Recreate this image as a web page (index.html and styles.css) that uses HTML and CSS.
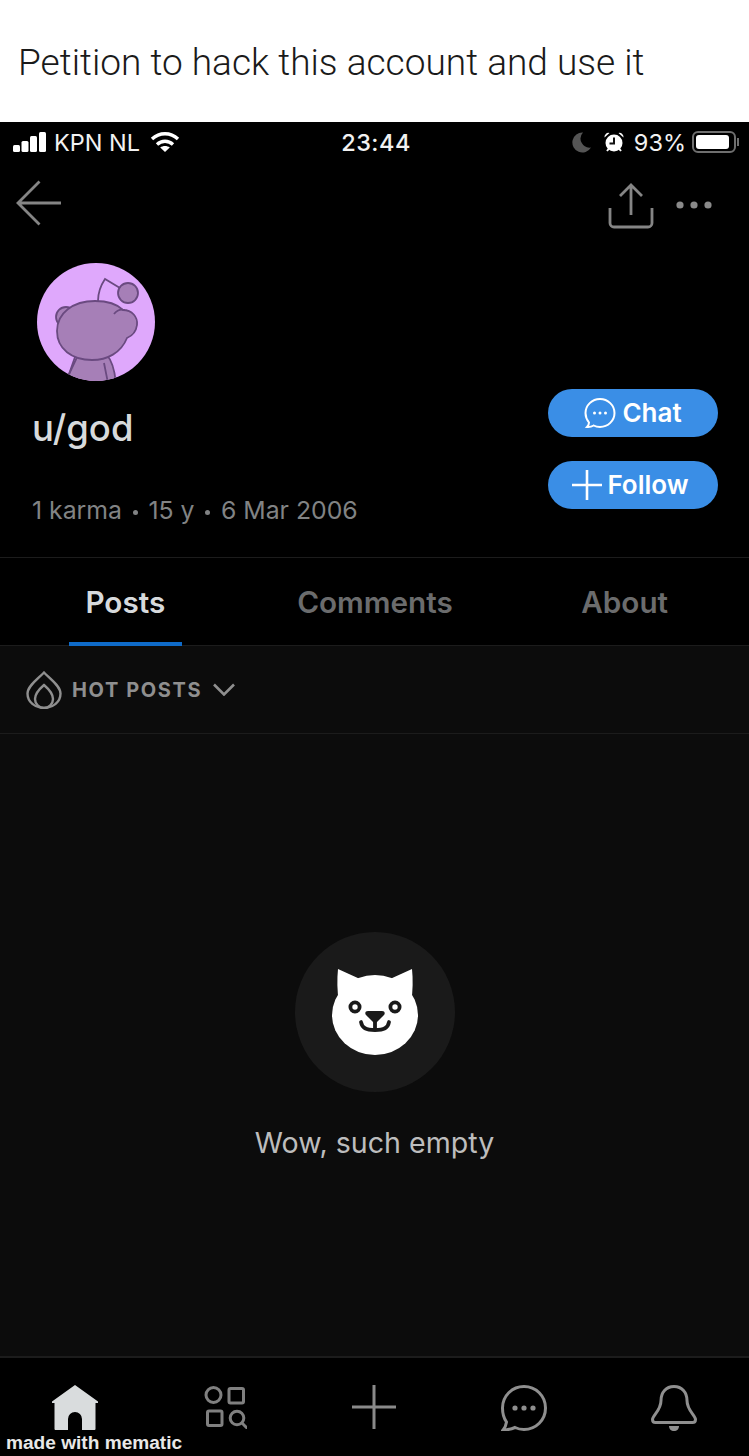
FILE: index.html
```html
<!DOCTYPE html>
<html lang="en">
<head>
<meta charset="UTF-8">
<meta name="viewport" content="width=device-width, initial-scale=1.0">
<title>Petition to hack this account</title>
<link rel="stylesheet" href="styles.css">
</head>
<body>
<div class="page">
    <div class="caption">Petition to hack this account and use it</div>

    <div class="status">
        <div class="status-left">
            <svg class="signal" width="33" height="22" viewBox="0 0 33 22" fill="#fff">
                <rect x="0" y="14" width="7" height="7" rx="1.500"/>
                <rect x="8.500" y="10" width="7" height="11" rx="1.500"/>
                <rect x="17" y="5" width="7" height="16" rx="1.500"/>
                <rect x="26" y="1" width="7" height="20" rx="1.500"/>
            </svg>
            <span class="carrier">KPN NL</span>
            <svg class="wifi" width="30" height="22" viewBox="0 0 30 22" fill="none" stroke="#fff" stroke-width="3.400">
                <path d="M2 8c7.500-7 18.500-7 26 0"/>
                <path d="M7 13.500c4.700-4.300 11.300-4.300 16 0"/>
                <path d="M15 21l-4.800-4.500c2.800-2 6.800-2 9.600 0z" fill="#fff" stroke="none"/>
            </svg>
        </div>
        <div class="clock">23:44</div>
        <div class="status-right">
            <svg width="20" height="22" viewBox="0 0 20 22"><path d="M11 1.500a10 10 0 1 0 8 15 9 9 0 0 1-8-15z" fill="#555"/></svg>
            <svg class="alarm" width="22" height="22" viewBox="0 0 22 22">
                <circle cx="11" cy="12" r="8.500" fill="#fff"/>
                <path d="M1.500 6.500a4 4 0 0 1 5-4.500zM20.500 6.500a4 4 0 0 0-5-4.500z" fill="#fff"/>
                <path d="M11 6.500v6H6.500" fill="none" stroke="#111" stroke-width="2"/>
                <path d="M4 20l2-2.500M18 20l-2-2.500" stroke="#fff" stroke-width="2"/>
            </svg>
            <span class="battery-text">93%</span>
            <div class="battery"><div class="battery-fill"></div></div>
            <div class="battery-cap"></div>
        </div>
    </div>

    <div class="topbar">
        <svg width="46" height="46" viewBox="0 0 46 46" fill="none" stroke="#858585" stroke-width="2.800">
            <path d="M45 23H2M23.500 1.500L2 23l21.500 21.500"/>
        </svg>
        <div class="top-actions">
            <svg width="46" height="46" viewBox="0 0 46 46" fill="none" stroke="#858585" stroke-width="2.800">
                <path d="M23 32V2M12 13L23 2l11 11"/>
                <path d="M2 25v15a4 4 0 0 0 4 4h34a4 4 0 0 0 4-4V25"/>
            </svg>
            <svg class="dots" width="36" height="8" viewBox="0 0 36 8" fill="#8a8a8a">
                <circle cx="4" cy="4" r="3.600"/><circle cx="18" cy="4" r="3.600"/><circle cx="32" cy="4" r="3.600"/>
            </svg>
        </div>
    </div>

    <div class="profile">
        <div class="profile-info">
            <svg class="avatar" width="118" height="118" viewBox="0 0 118 118">
                <defs><clipPath id="avatarClip"><circle cx="59" cy="59" r="59"/></clipPath></defs>
                <circle cx="59" cy="59" r="59" fill="#dfa8fc"/>
                <g clip-path="url(#avatarClip)" fill="#a67fb7" stroke="#6a4a80" stroke-width="1.800">
                    <path d="M27 122L41 92H70c5 6 8 16 9 30z"/>
                    <path d="M38 94L31 114M67 100l4 20" fill="none"/>
                    <circle cx="29" cy="54" r="10"/>
                    <circle cx="91" cy="30" r="10"/>
                    <path d="M61 38c0-8 3-16 7-22l15 9" fill="none"/>
                    <path d="M58 38C70 38 80 41 86 47 95 47 101 54 100 62 99 69 95 73 90 75 84 90 70 97 55 97 35 97 20 86 20 68 20 50 36 38 58 38z"/>
                    <path d="M77 51c3-4 7-5 11-4" fill="none"/>
                </g>
            </svg>
            <div class="username">u/god</div>
            <div class="meta">1 karma <span class="sep"></span> 15 y <span class="sep"></span> 6 Mar 2006</div>
        </div>
        <div class="profile-actions">
            <div class="pill">
                <svg width="32" height="32" viewBox="0 0 32 32" fill="none" stroke="#fff" stroke-width="2">
                    <path d="M16 2c8 0 14.500 6.300 14.500 14S24 30 16 30c-2.300 0-4.500-.5-6.300-1.500-1.700 1-4.200 1.700-6.700 1.500 1.300-1.300 2-2.800 2-4.500C3 23 1.500 19.700 1.500 16 1.500 8.300 8 2 16 2z"/>
                    <g fill="#fff" stroke="none"><circle cx="10.500" cy="16" r="1.500"/><circle cx="16" cy="16" r="1.500"/><circle cx="21.500" cy="16" r="1.500"/></g>
                </svg>
                <span>Chat</span>
            </div>
            <div class="pill pill-follow">
                <svg width="30" height="30" viewBox="0 0 30 30" fill="none" stroke="#fff" stroke-width="2.600"><path d="M15 0v30M0 15h30"/></svg>
                <span>Follow</span>
            </div>
        </div>
    </div>

    <div class="tabs">
        <div class="tab tab-active">Posts</div>
        <div class="tab">Comments</div>
        <div class="tab">About</div>
    </div>

    <div class="sort">
        <svg width="36" height="38" viewBox="0 0 36 38" fill="none" stroke="#8f8f8f" stroke-width="2.400">
            <path d="M18 1.500C24 7.500 34.500 15 34.500 22.500 34.500 31 27 37 18 37S1.500 31 1.500 22.500C1.500 15 12 7.500 18 1.500z"/>
            <path d="M18 14c3.500 3 9 8 9 14 0 5-4 9-9 9s-9-4-9-9c0-6 5.500-11 9-14z"/>
        </svg>
        <span class="sort-label">HOT POSTS</span>
        <svg width="22" height="13" viewBox="0 0 22 13" fill="none" stroke="#8f8f8f" stroke-width="2.600"><path d="M1 1.500l10 10 10-10"/></svg>
    </div>

    <div class="empty">
        <div class="empty-circle">
            <svg width="160" height="160" viewBox="0 0 160 160">
                <path d="M43 37l22 10-21 24c-2-12-2-24-1-34zM117 37L95 47l21 24c2-12 2-24 1-34z" fill="#fff"/>
                <ellipse cx="80" cy="83" rx="43" ry="40" fill="#fff"/>
                <g fill="none" stroke="#1a1a1a" stroke-width="3.800">
                    <circle cx="60" cy="75" r="4.600"/>
                    <circle cx="100" cy="75" r="4.600"/>
                    <path d="M66 90c1 6 5 8 14 8s13-2 14-8M80 88v9" stroke-linecap="round"/>
                </g>
                <path d="M73 79h14c2.500 0 3.500 2 2 4l-8 8c-.6.600-1.400.600-2 0l-8-8c-1.500-2-.5-4 2-4z" fill="#1a1a1a"/>
            </svg>
        </div>
        <div class="empty-text">Wow, such empty</div>
    </div>

    <div class="bottom-nav">
        <div class="nav-item">
            <svg width="48" height="46" viewBox="0 0 48 46" fill="#d9dcdd">
                <path d="M24 0L47 16.500v1.500h-2.500V44a1 1 0 0 1-1 1H31V34a7 7 0 0 0-14 0v11H4.500a1 1 0 0 1-1-1V18H1v-1.500z"/>
            </svg>
        </div>
        <div class="nav-item">
            <svg width="44" height="44" viewBox="0 0 44 44" fill="none" stroke="#808080" stroke-width="3">
                <circle cx="10.500" cy="10" r="7.500"/>
                <rect x="26" y="3.500" width="14.500" height="14.500" rx="1.500"/>
                <rect x="4.500" y="26" width="14.500" height="14.500" rx="1.500"/>
                <circle cx="34" cy="33" r="6.800"/>
                <path d="M39 38l5.500 5.500"/>
            </svg>
        </div>
        <div class="nav-item">
            <svg width="44" height="44" viewBox="0 0 44 44" fill="none" stroke="#8a8a8a" stroke-width="3"><path d="M22 0v44M0 22h44"/></svg>
        </div>
        <div class="nav-item">
            <svg width="46" height="46" viewBox="0 0 46 46" fill="none" stroke="#8f8f8f" stroke-width="3">
                <path d="M23 1.500c12 0 21.500 9.500 21.500 21.500S35 44.500 23 44.500c-3.500 0-6.500-.8-9-2-3.500 1.500-8 2.500-12 2.500 2-2 3-4.500 3.500-8C3 33.500 1.500 28.500 1.500 23 1.500 11 11 1.500 23 1.500z"/>
                <g fill="#8f8f8f" stroke="none"><circle cx="14" cy="23" r="2.600"/><circle cx="23" cy="23" r="2.600"/><circle cx="32" cy="23" r="2.600"/></g>
            </svg>
        </div>
        <div class="nav-item">
            <svg width="46" height="48" viewBox="0 0 46 48" fill="none" stroke="#8f8f8f" stroke-width="3">
                <path d="M23 1.500c8 0 13 6 13 14 0 10 8.500 15 8.500 19 0 2-1 3-3 3H4.500c-2 0-3-1-3-3 0-4 8.500-9 8.500-19 0-8 5-14 13-14z"/>
                <path d="M18 41h10c0 3-2 5-5 5s-5-2-5-5z" fill="#8f8f8f" stroke="none"/>
            </svg>
        </div>
        <div class="watermark">made with mematic</div>
    </div>
</div>
</body>
</html>
```

FILE: styles.css
```css
* {
    box-sizing: border-box;
}
body {
    margin: 0;
    font-family: Inter, "Liberation Sans", sans-serif;
    background-color: #000;
}
svg {
    display: block;
    flex-shrink: 0;
}
.page {
    width: 749px;
    height: 1456px;
    display: flex;
    flex-direction: column;
    overflow: hidden;
}
.caption {
    height: 122px;
    flex-shrink: 0;
    background-color: #fff;
    color: #1a1a1a;
    font-family: Roboto, "Liberation Sans", sans-serif;
    font-size: 37.050px;
    font-weight: 300;
    display: flex;
    align-items: center;
    padding-left: 18px;
    padding-top: 2px;
}

/* status bar */
.status {
    height: 40px;
    flex-shrink: 0;
    display: grid;
    grid-template-columns: 1fr auto 1fr;
    align-items: center;
    padding: 0 10px 0 13px;
    color: #f2f2f2;
    font-size: 23.500px;
}
.status-left {
    display: flex;
    align-items: center;
}
.carrier {
    margin-left: 8px;
    margin-right: 10px;
}
.clock {
    font-weight: 500;
    letter-spacing: 0.5px;
}
.status-right {
    display: flex;
    align-items: center;
    justify-content: flex-end;
}
.alarm {
    margin-left: 11px;
}
.battery-text {
    margin-left: 9px;
    margin-right: 6px;
}
.battery {
    width: 44px;
    height: 22px;
    border: 2px solid #6f6f6f;
    border-radius: 6px;
    padding: 2px;
}
.battery-fill {
    width: 93%;
    height: 100%;
    background-color: #fff;
    border-radius: 3px;
}
.battery-cap {
    width: 2px;
    height: 8px;
    background-color: #6f6f6f;
    margin-left: 1px;
}

/* top bar */
.topbar {
    height: 84px;
    flex-shrink: 0;
    display: flex;
    justify-content: space-between;
    align-items: flex-start;
    padding: 18px 37px 0 16px;
}
.top-actions {
    display: flex;
    align-items: center;
    gap: 22px;
    margin-top: 3px;
}
.top-actions .dots {
    margin-top: -3px;
}

/* profile */
.profile {
    height: 312px;
    flex-shrink: 0;
    display: flex;
    justify-content: space-between;
    padding: 17px 31px 0 32px;
    border-bottom: 1px solid #1c1c1c;
}
.avatar {
    margin-left: 5px;
}
.username {
    margin-top: 24px;
    color: #d7dadc;
    font-size: 36.500px;
    font-weight: 500;
    line-height: 46px;
}
.meta {
    margin-top: 42px;
    color: #818384;
    font-size: 24.800px;
    line-height: 34px;
}
.sep {
    display: inline-block;
    width: 5px;
    height: 5px;
    margin: 0 3.750px;
    border-radius: 50%;
    background-color: #818384;
    vertical-align: middle;
}
.profile-actions {
    display: flex;
    flex-direction: column;
    gap: 24px;
    padding-top: 126px;
}
.pill {
    width: 170px;
    height: 48px;
    border-radius: 24px;
    background-color: #3a8ee6;
    color: #fff;
    font-size: 26px;
    font-weight: 600;
    display: flex;
    align-items: center;
    justify-content: center;
    gap: 6px;
}
.pill span {
    margin-top: -2px;
}
.pill-follow {
    gap: 5px;
    padding-right: 5px;
}

/* tabs */
.tabs {
    height: 88px;
    flex-shrink: 0;
    display: grid;
    grid-template-columns: repeat(3, 1fr);
    border-bottom: 1px solid #1c1c1c;
}
.tab {
    display: flex;
    align-items: center;
    justify-content: center;
    position: relative;
    color: #6b6c6d;
    font-size: 29.700px;
    font-weight: 600;
    padding-left: 1px;
}
.tab-active {
    color: #d7dadc;
}
.tab-active::after {
    content: "";
    position: absolute;
    left: 69px;
    bottom: -1px;
    width: 113px;
    height: 4px;
    background-color: #0f6bc9;
}

/* sort row */
.sort {
    height: 88px;
    flex-shrink: 0;
    display: flex;
    align-items: center;
    padding-left: 26px;
    background-color: #0c0c0c;
    border-bottom: 1px solid #1c1c1c;
}
.sort-label {
    margin-left: 10px;
    margin-right: 11px;
    color: #8f8f8f;
    font-size: 20px;
    font-weight: 700;
    letter-spacing: 1.600px;
}

/* empty state */
.empty {
    flex: 1;
    display: flex;
    flex-direction: column;
    align-items: center;
    padding-top: 198px;
    background-color: #0c0c0c;
}
.empty-circle {
    width: 160px;
    height: 160px;
    border-radius: 50%;
    background-color: #1a1a1a;
}
.empty-text {
    margin-top: 32px;
    color: #bdbdbd;
    font-size: 28.600px;
    line-height: 38px;
}

/* bottom nav */
.bottom-nav {
    height: 100px;
    flex-shrink: 0;
    display: grid;
    grid-template-columns: repeat(5, 1fr);
    position: relative;
    background-color: #000;
    border-top: 2px solid #1c1c1c;
}
.nav-item {
    display: flex;
    justify-content: center;
    padding-top: 27px;
}
.watermark {
    position: absolute;
    left: 6px;
    bottom: 2px;
    color: #e8e8e8;
    font-family: "Liberation Sans", sans-serif;
    font-size: 19.100px;
    font-weight: 700;
    line-height: 22px;
}
```
